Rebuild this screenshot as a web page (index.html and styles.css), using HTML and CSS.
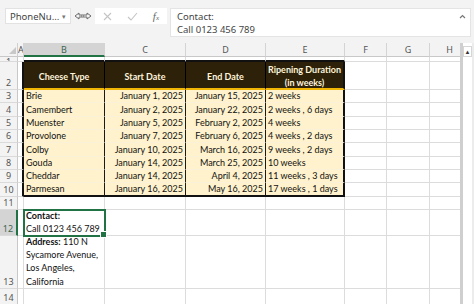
FILE: index.html
```html
<!DOCTYPE html>
<html lang="en">
<head>
  <meta charset="UTF-8"/>
  <title>Cheese Ripening Sheet</title>
  <link rel="stylesheet" href="styles.css">
</head>
<body>

  <!-- Formula bar -->
  <div class="fbar">
    <div class="namebox">
      <span>PhoneNu...</span>
      <span class="drop">&#9662;</span>
    </div>
    <svg class="split" width="18" height="8" viewBox="0 0 18 8">
      <path d="M1 4 L5 1 V3 H13 V1 L17 4 L13 7 V5 H5 V7 Z" fill="none" stroke="#6b6b6b" stroke-width="1"/>
      <path d="M7 4 H11" stroke="#6b6b6b" stroke-width="1" stroke-dasharray="1 1"/>
    </svg>
    <div class="fxbox">
      <svg width="9" height="9" viewBox="0 0 9 9">
        <path d="M1 1 L8 8 M8 1 L1 8" stroke="#c4c4c4" stroke-width="1.1"/>
      </svg>
      <svg width="11" height="9" viewBox="0 0 11 9">
        <path d="M1 5 L4 8 L10 1" fill="none" stroke="#c4c4c4" stroke-width="1.1"/>
      </svg>
      <span class="fx">f<small>x</small></span>
    </div>
    <div class="formula">
      <div>Contact:</div>
      <div>Call 0123 456 789</div>
      <svg class="caret" width="7" height="5" viewBox="0 0 7 5">
        <path d="M1 4 L3.5 1.5 L6 4" fill="none" stroke="#777" stroke-width="1.2"/>
      </svg>
    </div>
  </div>

  <div class="sheet-area">
    <div class="sheet-clip">
      <div class="sheet">
        <!-- column headers -->
        <div class="c corner">
          <svg width="7" height="7" viewBox="0 0 7 7"><path d="M7 0 V7 H0 Z" fill="#c8c8c8"/></svg>
        </div>
        <div class="c ch">A</div>
        <div class="c ch sel">B</div>
        <div class="c ch">C</div>
        <div class="c ch">D</div>
        <div class="c ch">E</div>
        <div class="c ch">F</div>
        <div class="c ch">G</div>
        <div class="c ch">H</div>

        <!-- row 1 -->
        <div class="c rh r1">1</div>
        <div class="c"></div>
        <div class="c top"></div><div class="c top"></div><div class="c top"></div><div class="c top"></div>
        <div class="c"></div><div class="c"></div><div class="c"></div>

        <!-- row 2 -->
        <div class="c rh">2</div>
        <div class="c lft"></div>
        <div class="c th">Cheese Type</div>
        <div class="c th">Start Date</div>
        <div class="c th">End Date</div>
        <div class="c th last"><p>Ripening Duration<br>(in weeks)</p></div>
        <div class="c"></div><div class="c"></div><div class="c"></div>

        <!-- row 3 -->
        <div class="c rh">3</div>
        <div class="c lft"></div>
        <div class="c td">Brie</div>
        <div class="c td num">January 1, 2025</div>
        <div class="c td num">January 15, 2025</div>
        <div class="c td last">2 weeks</div>
        <div class="c"></div><div class="c"></div><div class="c"></div>

        <!-- row 4 -->
        <div class="c rh">4</div>
        <div class="c lft"></div>
        <div class="c td">Camembert</div>
        <div class="c td num">January 2, 2025</div>
        <div class="c td num">January 22, 2025</div>
        <div class="c td last">2 weeks , 6 days</div>
        <div class="c"></div><div class="c"></div><div class="c"></div>

        <!-- row 5 -->
        <div class="c rh">5</div>
        <div class="c lft"></div>
        <div class="c td">Muenster</div>
        <div class="c td num">January 5, 2025</div>
        <div class="c td num">February 2, 2025</div>
        <div class="c td last">4 weeks</div>
        <div class="c"></div><div class="c"></div><div class="c"></div>

        <!-- row 6 -->
        <div class="c rh">6</div>
        <div class="c lft"></div>
        <div class="c td">Provolone</div>
        <div class="c td num">January 7, 2025</div>
        <div class="c td num">February 6, 2025</div>
        <div class="c td last">4 weeks , 2 days</div>
        <div class="c"></div><div class="c"></div><div class="c"></div>

        <!-- row 7 -->
        <div class="c rh">7</div>
        <div class="c lft"></div>
        <div class="c td">Colby</div>
        <div class="c td num">January 10, 2025</div>
        <div class="c td num">March 16, 2025</div>
        <div class="c td last">9 weeks , 2 days</div>
        <div class="c"></div><div class="c"></div><div class="c"></div>

        <!-- row 8 -->
        <div class="c rh">8</div>
        <div class="c lft"></div>
        <div class="c td">Gouda</div>
        <div class="c td num">January 14, 2025</div>
        <div class="c td num">March 25, 2025</div>
        <div class="c td last">10 weeks</div>
        <div class="c"></div><div class="c"></div><div class="c"></div>

        <!-- row 9 -->
        <div class="c rh">9</div>
        <div class="c lft"></div>
        <div class="c td">Cheddar</div>
        <div class="c td num">January 14, 2025</div>
        <div class="c td num">April 4, 2025</div>
        <div class="c td last">11 weeks , 3 days</div>
        <div class="c"></div><div class="c"></div><div class="c"></div>

        <!-- row 10 -->
        <div class="c rh">10</div>
        <div class="c lft"></div>
        <div class="c td bot">Parmesan</div>
        <div class="c td num bot">January 16, 2025</div>
        <div class="c td num bot">May 16, 2025</div>
        <div class="c td last bot">17 weeks , 1 days</div>
        <div class="c"></div><div class="c"></div><div class="c"></div>

        <!-- row 11 -->
        <div class="c rh">11</div>
        <div class="c"></div><div class="c"></div><div class="c"></div><div class="c"></div>
        <div class="c"></div><div class="c"></div><div class="c"></div><div class="c"></div>

        <!-- row 12 -->
        <div class="c rh sel">12</div>
        <div class="c"></div>
        <div class="c active"><p><b>Contact:</b><br>Call 0123 456 789</p></div>
        <div class="c"></div><div class="c"></div><div class="c"></div>
        <div class="c"></div><div class="c"></div><div class="c"></div>

        <!-- row 13 -->
        <div class="c rh">13</div>
        <div class="c"></div>
        <div class="c wrap"><p><b>Address:</b> 110 N<br>Sycamore Avenue,<br>Los Angeles,<br>California</p></div>
        <div class="c"></div><div class="c"></div><div class="c"></div>
        <div class="c"></div><div class="c"></div><div class="c"></div>

        <!-- row 14 -->
        <div class="c rh">14</div>
        <div class="c"></div><div class="c"></div><div class="c"></div><div class="c"></div>
        <div class="c"></div><div class="c"></div><div class="c"></div><div class="c"></div>
      </div>
    </div>

    <div class="vscroll">
      <div class="vs-up">&#9650;</div>
    </div>
  </div>

</body>
</html>
```

FILE: styles.css
```css
* { box-sizing: border-box; margin: 0; padding: 0; }
html, body { height: 100%; overflow: hidden; }
body { background: #fff; font-family: 'Lato', sans-serif; color: #111; }

/* formula bar */
.fbar {
  height: 43px;
  background: #f3f3f3;
  display: flex;
  align-items: flex-start;
  padding: 8px 3px 0 5px;
  font-family: 'Noto Sans', sans-serif;
  font-size: 9.5px;
  color: #444;
}

.namebox {
  width: 66px;
  height: 16px;
  background: #fff;
  border: 1px solid #e2e2e2;
  display: flex;
  align-items: center;
  justify-content: space-between;
  padding: 0 4px;
}

.drop { font-size: 7px; color: #777; }

.split { margin: 4px 2px 0 3px; }

.fxbox {
  width: 72px;
  height: 16px;
  margin-left: 1px;
  background: #fff;
  display: flex;
  align-items: center;
  justify-content: space-between;
  padding: 0 8px 0 8px;
}

.fx {
  font-family: 'Liberation Serif', serif;
  font-style: italic;
  font-size: 11px;
  color: #666;
}
.fx small { font-size: 7px; }

.formula {
  flex: 1;
  height: 29px;
  margin-left: 3px;
  background: #fff;
  border: 1px solid #e4e4e4;
  padding: 2px 6px;
  line-height: 12.5px;
  position: relative;
}

.caret { position: absolute; right: 4px; top: 5px; }

/* sheet */
.sheet-area { display: flex; }
.sheet-clip { width: 460px; overflow: hidden; }

.sheet {
  width: 470px;
  display: grid;
  grid-template-columns: 18px 6px 81px 81px 80px 79px 42px 43px 40px;
  grid-template-rows: 14px 5px 28px 13px 14px 13px 13px 14px 13px 13px 14px 13px 26px 53px 16px;
  font-size: 9px;
}

.c {
  border-right: 1px solid #dcdcdc;
  border-bottom: 1px solid #dcdcdc;
  padding: 0 2px;
  line-height: 13px;
  white-space: nowrap;
  overflow: hidden;
  display: flex;
  flex-direction: column;
  justify-content: flex-end;
}

.c p { margin: 0; }

.corner {
  background: #f3f3f3;
  border-right-color: #d0d0d0;
  border-bottom-color: #c8c8c8;
  align-items: flex-end;
  padding: 0 1px 2px 0;
}

.ch {
  background: #f3f3f3;
  color: #555;
  font-family: 'Noto Sans', sans-serif;
  font-size: 9px;
  text-align: center;
  justify-content: center;
  border-right-color: #d4d4d4;
  border-bottom-color: #c8c8c8;
  padding: 0;
}

.ch.sel {
  background: #d4d4d4;
  color: #3e6650;
  border-bottom: 2px solid #217346;
}

.rh {
  background: #f3f3f3;
  color: #555;
  font-family: 'Noto Sans', sans-serif;
  font-size: 9px;
  text-align: center;
  border-right-color: #c8c8c8;
  border-bottom-color: #dadada;
  padding: 0;
}

.rh.r1 { justify-content: flex-start; line-height: 10px; }

.rh.sel {
  background: #d4d4d4;
  color: #3e6650;
  border-right: 2px solid #217346;
}

/* cheese table */
.top { border-bottom: 2px solid #111; }
.lft { border-right: 2px solid #111; }

.th {
  background: #2d2109;
  color: #fdf4dc;
  font-weight: 700;
  text-align: center;
  justify-content: center;
  border-right: 1px solid #000;
  border-bottom: 2px solid #f2b705;
  line-height: 13px;
  padding-top: 2px;
}

.td {
  background: #fff2cc;
  color: #111;
  border-right: 1px solid #1a1a1a;
  border-bottom: 1px solid #fbf1d8;
}

.num { text-align: right; }
.last { border-right: 2px solid #111; }
.td.bot { border-bottom: 2px solid #111; }

.active {
  position: relative;
  z-index: 1;
  outline: 2px solid #217346;
  outline-offset: -1px;
  overflow: visible;
}

.active::after {
  content: "";
  position: absolute;
  right: -3px;
  bottom: -3px;
  width: 5px;
  height: 5px;
  background: #217346;
  border: 1px solid #fff;
}

.wrap { line-height: 13.3px; }

/* scrollbar */
.vscroll {
  width: 14px;
  height: 262px;
  background: #fff;
  border-left: 3px solid #cfcfcf;
  border-right: 2px solid #ececec;
}

.vs-up {
  height: 11px;
  margin-top: 3px;
  border: 1px solid #d6d6d6;
  font-size: 6px;
  line-height: 9px;
  text-align: center;
  color: #333;
}
```
